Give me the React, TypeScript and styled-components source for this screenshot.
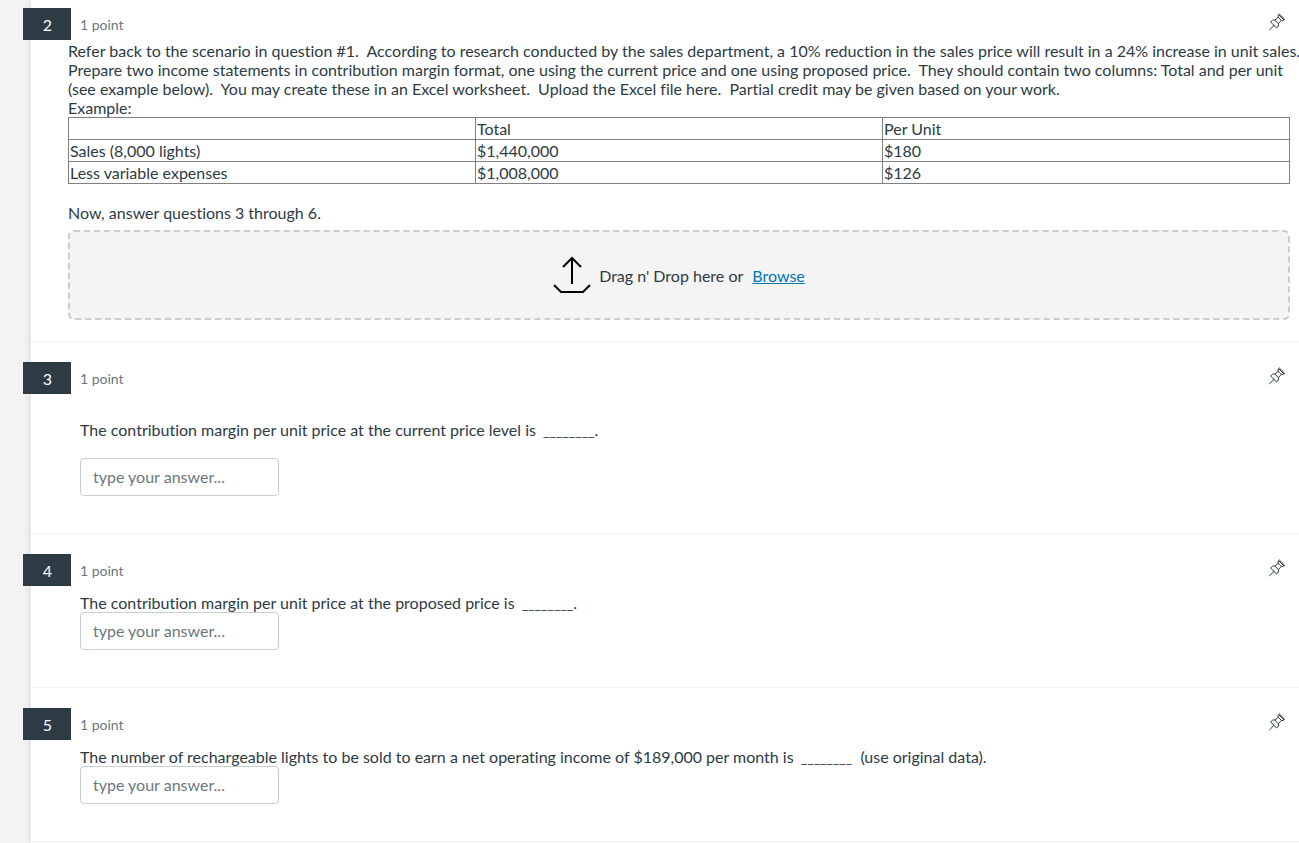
import React from 'react';
import styled, { createGlobalStyle } from 'styled-components';

const GlobalStyle = createGlobalStyle`
  *, *::before, *::after { box-sizing: border-box; }
  body {
    margin: 0;
    overflow-x: hidden;
    background: #f4f4f4;
    color: #2d3b45;
    font-family: Lato, sans-serif;
    font-size: 16px;
    font-variant-ligatures: none;
    line-height: 19px;
  }
  p { margin: 0; }
`;

const Page = styled.div`
  min-height: 100vh;
  padding-left: 31px;
`;

const Sheet = styled.main`
  min-height: 100vh;
  background: #fff;
  box-shadow: 0 0 10px rgba(0, 0, 0, 0.12);
`;

const Question = styled.section<{ $first?: boolean }>`
  padding: ${(p) => (p.$first ? '8px 9px 21px 0' : '20px 9px 37px 0')};
  border-bottom: 1px solid #f2f3f4;
`;

const Header = styled.header`
  display: flex;
  align-items: center;
  height: 32px;
  margin-left: -8px;
`;

const Badge = styled.h2`
  width: 48px;
  margin: 0 9px 0 0;
  padding: 2px 0 0 1px;
  background: #2d3b45;
  color: #fff;
  font-size: 16px;
  font-weight: 400;
  line-height: 30px;
  text-align: center;
`;

const Points = styled.span`
  flex: 1;
  color: #6b7780;
  font-size: 14px;
`;

const PinButton = styled.button`
  display: flex;
  align-items: center;
  width: 22px;
  height: 22px;
  margin-bottom: 4px;
  padding: 0;
  border: 0;
  background: none;
  color: #2d3b45;
`;

const Prompt = styled.div`
  margin-top: 1px;
  padding-left: 37px;
`;

const Line = styled.span`
  display: block;
  white-space: nowrap;
`;

const Sample = styled.table`
  width: 100%;
  margin-bottom: 19px;
  border-collapse: collapse;
  table-layout: fixed;

  th, td {
    height: 22px;
    padding: 1px;
    border: 1px solid #808080;
    font-weight: 400;
    text-align: left;
  }
`;

const DropZone = styled.div`
  display: flex;
  align-items: center;
  justify-content: center;
  height: 90px;
  margin-top: 8px;
  border: 2px dashed #c7cdd1;
  border-radius: 6px;
  background: #f4f4f4;

  svg { margin-right: 8px; }
  a { margin-left: 9px; color: #0374b5; }
`;

const Answer = styled.div<{ $spaced?: boolean }>`
  display: flex;
  flex-direction: column;
  align-items: flex-start;
  gap: ${(p) => (p.$spaced ? '19px' : '0')};
  margin-top: ${(p) => (p.$spaced ? '26px' : '7px')};
  padding-left: 49px;
`;

const Blank = styled.span`
  font-size: 14px;
  line-height: 14px;
`;

const TextBox = styled.input`
  width: 199px;
  height: 38px;
  padding: 0 12px 2px;
  border: 1px solid #c7cdd1;
  border-radius: 4px;
  background: #fff;
  color: #2d3b45;
  font: 16px Lato, sans-serif;

  &::placeholder { color: #6b7780; opacity: 1; }
`;

const PinIcon = () => (
  <svg width="18" height="18" viewBox="0 0 18 18" fill="none" stroke="currentColor" strokeWidth="1" strokeLinejoin="round" strokeLinecap="round" aria-hidden="true">
    <path d="M1.5 16.8 6.2 12.1" />
    <path d="M2.9 8.7c.8-1.6 2.4-2 4-1.6l3.4-2.9-.4-1.8 1.5-1.4 5.2 5.2-1.5 1.5-1.7-.4-3 3.4c.4 1.6 0 3.3-1.6 4.1z" />
    <path d="m10.3 4.2 3.1 3.1M6.9 7.1l3.5 3.6M11 2l4.8 4.8" />
  </svg>
);

const UploadIcon = () => (
  <svg width="38" height="38" viewBox="0 0 38 38" fill="none" stroke="#000" strokeWidth="2" aria-hidden="true">
    <path d="M19 28V2M10 11l9-9 9 9M1 29l7 7h22l7-7" />
  </svg>
);

function QuestionHeader({ number }: { number: number }) {
  return (
    <Header>
      <Badge>{number}</Badge>
      <Points>1 point</Points>
      <PinButton type="button" aria-label={`Pin question ${number}`}>
        <PinIcon />
      </PinButton>
    </Header>
  );
}

const blanks = [
  { number: 3, spaced: true, before: 'The contribution margin per unit price at the current price level is', after: '.' },
  { number: 4, spaced: false, before: 'The contribution margin per unit price at the proposed price is', after: '.' },
  { number: 5, spaced: false, before: 'The number of rechargeable lights to be sold to earn a net operating income of $189,000 per month is', after: ' \u00a0(use original data).' },
];

export default function App() {
  return (
    <Page>
      <GlobalStyle />
      <Sheet>
        <Question $first>
          <QuestionHeader number={2} />
          <Prompt>
            <p>
              <Line>Refer back to the scenario in question #1.&nbsp; According to research conducted by the sales department, a 10% reduction in the sales price will result in a 24% increase in unit sales.</Line>
              <Line>Prepare two income statements in contribution margin format, one using the current price and one using proposed price.&nbsp; They should contain two columns: Total and per unit</Line>
              <Line>(see example below).&nbsp; You may create these in an Excel worksheet.&nbsp; Upload the Excel file here.&nbsp; Partial credit may be given based on your work.</Line>
            </p>
            <p>Example:</p>
            <Sample>
              <thead>
                <tr><td /><th scope="col">Total</th><th scope="col">Per Unit</th></tr>
              </thead>
              <tbody>
                <tr><th scope="row">Sales (8,000 lights)</th><td>$1,440,000</td><td>$180</td></tr>
                <tr><th scope="row">Less variable expenses</th><td>$1,008,000</td><td>$126</td></tr>
              </tbody>
            </Sample>
            <p>Now, answer questions 3 through 6.</p>
            <DropZone>
              <UploadIcon />
              <span>Drag n' Drop here or</span>
              <a href="#browse">Browse</a>
            </DropZone>
          </Prompt>
        </Question>
        {blanks.map((q) => (
          <Question key={q.number}>
            <QuestionHeader number={q.number} />
            <Answer $spaced={q.spaced}>
              <label htmlFor={`answer-${q.number}`}>
                {q.before}<Blank> &nbsp;________</Blank>{q.after}
              </label>
              <TextBox id={`answer-${q.number}`} type="text" placeholder="type your answer..." />
            </Answer>
          </Question>
        ))}
      </Sheet>
    </Page>
  );
}
